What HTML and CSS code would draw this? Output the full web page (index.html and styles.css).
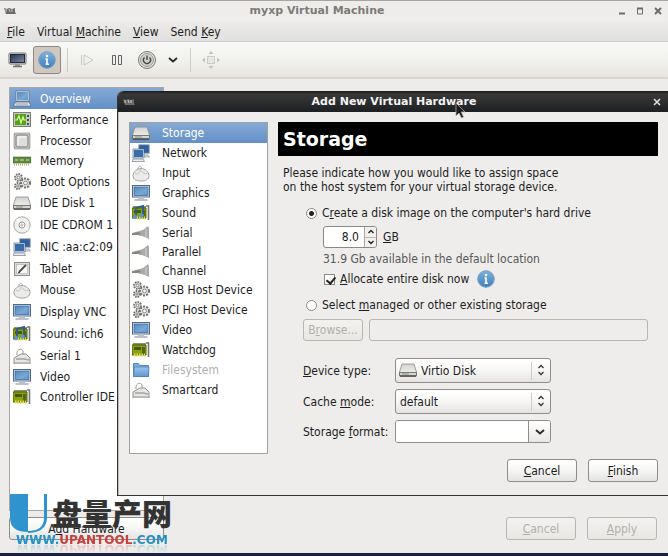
FILE: index.html
```html
<!DOCTYPE html>
<html lang="en">
<head>
<meta charset="utf-8">
<title>myxp Virtual Machine</title>
<link rel="stylesheet" href="styles.css">
</head>
<body>
<svg class="defs" width="0" height="0" aria-hidden="true">
  <defs>
    <linearGradient id="g-screen" x1="0" y1="0" x2="1" y2="1"><stop offset="0" stop-color="#5585ba"/><stop offset=".6" stop-color="#79a8d6"/><stop offset="1" stop-color="#5e92c8"/></linearGradient>
    <linearGradient id="g-dark" x1="0" y1="0" x2="1" y2="1"><stop offset="0" stop-color="#26324d"/><stop offset="1" stop-color="#7d8aa6"/></linearGradient>
    <linearGradient id="g-disk" x1="0" y1="0" x2="0" y2="1"><stop offset="0" stop-color="#d2d2d0"/><stop offset="1" stop-color="#f7f7f6"/></linearGradient>
    <linearGradient id="g-info" x1="0" y1="0" x2="0" y2="1"><stop offset="0" stop-color="#7fb0dc"/><stop offset="1" stop-color="#3f7fbf"/></linearGradient>
    <linearGradient id="g-folder" x1="0" y1="0" x2="0" y2="1"><stop offset="0" stop-color="#9cc4ea"/><stop offset="1" stop-color="#5d99d3"/></linearGradient>
  </defs>
  <symbol id="i-vmm" viewBox="0 0 12 8"><path d="M0 1l3 1 2-1 3 1 3-1v4l1 2H2z" fill="#6a6a66"/><path d="M2 2v3M5 2l1 3M8 2v3" stroke="#c9c9c5"/></symbol>
  <symbol id="i-computer" viewBox="0 0 18 18"><rect x="3.5" y="1.500" width="12" height="9" fill="url(#g-screen)" stroke="#e6e8ea"/><rect x="3" y="1" width="13" height="10" fill="none" stroke="#46607f" stroke-width=".6"/><path d="M3 12h13l2 4H0z" fill="#e9ebed" stroke="#5a6c80" stroke-width=".8"/><path d="M3 14h12" stroke="#8d98a3"/></symbol>
  <symbol id="i-perf" viewBox="0 0 18 18"><rect x=".5" y="1.500" width="17" height="14" fill="#c8cac4" stroke="#7a7f74"/><rect x="2" y="3" width="11" height="11" fill="#57a01c"/><path d="M2 9h2l2-4 2 7 2-6 1 3h2" fill="none" stroke="#d6ff95" stroke-width="1.200"/><path d="M15 4v2M15 8v2M15 12v2" stroke="#4a5046" stroke-width="2"/></symbol>
  <symbol id="i-cpu" viewBox="0 0 18 18"><rect x="1.500" y="1.500" width="15" height="15" fill="none" stroke="#6b6b68" stroke-width="2" stroke-dasharray="1 1"/><rect x="3" y="3" width="12" height="12" rx="1" fill="#dededc" stroke="#73736f"/><path d="M5 13V5h8" fill="none" stroke="#fff"/></symbol>
  <symbol id="i-memory" viewBox="0 0 18 18"><path d="M0 5h18v6H0z" fill="#5f8a3a" stroke="#45692a" stroke-width=".6"/><path d="M2 7h3v2H2zM7 7h4v2H7zM13 7h3v2h-3z" fill="#98b37d"/><path d="M1 12.500h16" stroke="#b7ae72" stroke-width="2" stroke-dasharray="1 1"/></symbol>
  <symbol id="i-gears" viewBox="0 0 18 18"><g fill="#e7e7e4" stroke="#6f6f6c"><circle cx="5.500" cy="4.500" r="3.400" stroke-width="2" stroke-dasharray="1.600 1"/><circle cx="5" cy="13" r="3" stroke-width="2" stroke-dasharray="1.500 1"/><circle cx="12.500" cy="10" r="4.500" stroke-width="2" stroke-dasharray="2 1.200"/></g><g fill="#fff" stroke="#6b6b68" stroke-width=".8"><circle cx="5.500" cy="4.500" r="1.300"/><circle cx="5" cy="13" r="1.100"/><circle cx="12.500" cy="10" r="1.900"/></g></symbol>
  <symbol id="i-disk" viewBox="0 0 18 18"><path d="M3 3h12l2.500 8v4H.5v-4z" fill="url(#g-disk)" stroke="#8c8c89" stroke-width=".8"/><path d="M.5 11.500h17V14a1 1 0 0 1-1 1h-15a1 1 0 0 1-1-1z" fill="#d4d4d1" stroke="#5f5f5c" stroke-width=".8"/><path d="M1 15h16" stroke="#3f3f3d" stroke-width="1.200"/><path d="M3 13h7" stroke="#8a8a86"/></symbol>
  <symbol id="i-cd" viewBox="0 0 18 18"><circle cx="9" cy="9" r="8.200" fill="#f0f0ee" stroke="#a9a9a6"/><path d="M9 9L4 3M9 9l6 5" stroke="#fff" stroke-width="2"/><circle cx="9" cy="9" r="3" fill="#fff" stroke="#999"/><circle cx="9" cy="9" r="1.200" fill="#e2e2e0" stroke="#aaa" stroke-width=".6"/></symbol>
  <symbol id="i-net" viewBox="0 0 18 18"><rect x="7" y="1" width="10" height="8" fill="#2e62a0" stroke="#5c7591"/><path d="M9 11h7l1.500 2h-7z" fill="#e3e6e9" stroke="#8793a0" stroke-width=".7"/><rect x="1.500" y="5.500" width="10" height="8" fill="#356dae" stroke="#e2e5e8"/><rect x="1" y="5" width="11" height="9" fill="none" stroke="#44576d" stroke-width=".6"/><path d="M1 15h10l1.500 2.500H0z" fill="#eceef0" stroke="#75818e" stroke-width=".7"/></symbol>
  <symbol id="i-tablet" viewBox="0 0 18 18"><rect x="1.500" y="2.500" width="15" height="13" fill="#ddd" stroke="#8c8c89"/><rect x="3.500" y="4.500" width="11" height="9" fill="#f7f7f6" stroke="#aaa" stroke-width=".6"/><path d="M6 12l7-7" stroke="#4b4b49" stroke-width="1.800"/><path d="M5 13l2-1" stroke="#222"/></symbol>
  <symbol id="i-mouse" viewBox="0 0 18 18"><path d="M5.500 6C6 1 10 1 9.500 6" fill="none" stroke="#aaa"/><path d="M9 4.500c4 0 8 3.500 8 7 0 4-3.500 5.500-8 5.500s-8-1.500-8-5.500c0-3.500 4-7 8-7z" fill="#ebebe9" stroke="#a2a29f"/><path d="M3 9c3 2.500 4 .5 5.500-4M8.500 6c2 3 4 4 7 3.500" fill="none" stroke="#c2c2bf"/></symbol>
  <symbol id="i-display" viewBox="0 0 18 18"><rect x=".5" y="1.500" width="17" height="11.500" fill="#e4e7ea" stroke="#4f6b8b"/><rect x="2" y="3" width="14" height="8.500" fill="url(#g-screen)" stroke="#3566a0" stroke-width=".7"/><path d="M6 13h6v2H6z" fill="#b9bfc6"/><path d="M2.500 16h13" stroke="#9da7b2" stroke-width="1.400"/></symbol>
  <symbol id="i-card" viewBox="0 0 18 18"><path d="M0 4h14v10H0z" fill="#86a30c" stroke="#4e6207"/><path d="M14 2h2.500v14" fill="none" stroke="#777b72" stroke-width="1.600"/><path d="M2 6h7v3H2z" fill="#48580c"/><path d="M10 6h3v7h-3z" fill="#536616"/><path d="M2 14h11" stroke="#ead94a" stroke-width="3" stroke-dasharray="1.500 1"/><path d="M1 3h13" stroke="#3e4d0a" stroke-width="1.200"/></symbol>
  <symbol id="i-sound" viewBox="0 0 18 18"><use href="#i-card"/><path d="M4 13V4l7-2v9" fill="none" stroke="#2d5c8f" stroke-width="1.800"/><ellipse cx="3" cy="13" rx="2.400" ry="1.900" fill="#5c93cb"/><ellipse cx="9.500" cy="11.500" rx="2.400" ry="1.900" fill="#5c93cb"/></symbol>
  <symbol id="i-serial" viewBox="0 0 18 18"><path d="M4 8c-1-6 5-7 6-4v3" fill="none" stroke="#9a9a97"/><path d="M1 11l7-4h5l4 4v5H1z" fill="#e6e6e4" stroke="#929290"/><path d="M3 12h8l5 1" fill="none" stroke="#a4a4a1" stroke-width="1.300"/><path d="M0 16.500h18" stroke="#b8b8b5"/></symbol>
  <symbol id="i-plug" viewBox="0 0 18 18"><path d="M0 9l11-3 5-4 1 2v11l-2-1-5-2H8l-2-1H0z" fill="#aaa9a6"/><path d="M0 9.500l7-1.500 2 2-4 1H0z" fill="#858481"/><path d="M14 5v8" stroke="#c8c7c4" stroke-width="1.500"/></symbol>
  <symbol id="i-folder" viewBox="0 0 18 18"><path d="M1.500 15.500v-13h5l1 2h9v11z" fill="#78aede" stroke="#5585b5"/><path d="M1.500 15.500L2.500 6h14.500l-.5 9.500z" fill="url(#g-folder)" stroke="#4b83bc" stroke-width=".8"/></symbol>
  <symbol id="i-info" viewBox="0 0 18 18"><circle cx="9" cy="9" r="8.300" fill="url(#g-info)" stroke="#7d9fbe"/><circle cx="9" cy="5" r="1.300" fill="#fff"/><path d="M7.500 8H9v5M7.500 13.200h3.500" fill="none" stroke="#fff" stroke-width="1.600"/></symbol>
  <symbol id="i-updown" viewBox="0 0 8 12"><path d="M1.500 4L4 1.500 6.500 4M1.500 8L4 10.500 6.500 8" fill="none" stroke="#333" stroke-width="1.300"/></symbol>
  <symbol id="i-down" viewBox="0 0 10 6"><path d="M1 1l4 3.500L9 1" fill="none" stroke="#2b2b2b" stroke-width="1.900"/></symbol>
</svg>

<div class="main-window">
  <header class="titlebar">
    <svg class="app-icon"><use href="#i-vmm"/></svg>
    <h1 class="title">myxp Virtual Machine</h1>
    <div class="window-controls">
      <button aria-label="Minimize"><svg viewBox="0 0 8 8"><path d="M1 6.500h6" stroke-width="2"/></svg></button>
      <button aria-label="Maximize"><svg viewBox="0 0 8 8"><path d="M1 1.500h6" stroke-width="2"/><path d="M1.500 2v5h5V2"/></svg></button>
      <button aria-label="Close"><svg viewBox="0 0 8 8"><path d="M1 1l6 6M7 1L1 7" stroke-width="2"/></svg></button>
    </div>
  </header>
  <nav class="menubar">
    <a href="#"><u>F</u>ile</a><a href="#">Virtual <u>M</u>achine</a><a href="#"><u>V</u>iew</a><a href="#">Send <u>K</u>ey</a>
  </nav>
  <div class="toolbar">
    <button aria-label="Console"><svg width="19" height="18" viewBox="0 0 19 18"><rect x="1" y="2" width="17" height="11" rx="1" fill="#e8e8e6" stroke="#72726f"/><rect x="2.500" y="3.500" width="14" height="8" fill="url(#g-dark)" stroke="#222b40"/><path d="M7 13h5v2H7z" fill="#999"/><path d="M5 15.500h9" stroke="#72726f" stroke-width="1.500"/></svg></button>
    <button class="pressed" aria-label="Details" aria-pressed="true"><svg width="18" height="18"><use href="#i-info"/></svg></button>
    <span class="sep"></span>
    <button disabled aria-label="Run"><svg width="14" height="14" viewBox="0 0 14 14"><path d="M1.500 2v10M4 2v10l9-5z" fill="none" stroke="#c8c8c5"/></svg></button>
    <button aria-label="Pause"><svg width="12" height="12" viewBox="0 0 12 12"><path d="M1.500 1.500h3v9h-3zM7.500 1.500h3v9h-3z" fill="#eee" stroke="#626260"/></svg></button>
    <button aria-label="Shut down"><svg width="20" height="20" viewBox="0 0 20 20"><circle cx="10" cy="10" r="8.500" fill="#e4e4e2" stroke="#787875"/><circle cx="10" cy="10" r="6.500" fill="#d0d0cd" stroke="#9b9b98"/><path d="M7.500 7.500a3.500 3.500 0 1 0 5 0M10 5.500V10" fill="none" stroke="#454543" stroke-width="1.400"/></svg></button>
    <button class="narrow" aria-label="Shut down options"><svg width="10" height="6"><use href="#i-down"/></svg></button>
    <span class="sep wide"></span>
    <button disabled aria-label="Fullscreen"><svg width="18" height="18" viewBox="0 0 18 18"><rect x="5.500" y="5.500" width="7" height="7" fill="#e6e6e3" stroke="#bcbcb9" stroke-dasharray="2 1"/><path d="M9 0l2.500 3h-5zM9 18l2.500-3h-5zM0 9l3-2.500v5zM18 9l-3-2.500v5z" fill="#c2c2bf"/></svg></button>
  </div>
  <main class="details">
    <section class="sidebar">
      <ul class="hw-list">
        <li class="selected"><svg><use href="#i-computer"/></svg>Overview</li>
        <li><svg><use href="#i-perf"/></svg>Performance</li>
        <li><svg><use href="#i-cpu"/></svg>Processor</li>
        <li class="short"><svg><use href="#i-memory"/></svg>Memory</li>
        <li><svg><use href="#i-gears"/></svg>Boot Options</li>
        <li class="tall"><svg><use href="#i-disk"/></svg>IDE Disk 1</li>
        <li class="tall"><svg><use href="#i-cd"/></svg>IDE CDROM 1</li>
        <li class="tall"><svg><use href="#i-net"/></svg>NIC :aa:c2:09</li>
        <li><svg><use href="#i-tablet"/></svg>Tablet</li>
        <li class="tall"><svg><use href="#i-mouse"/></svg>Mouse</li>
        <li class="tall"><svg><use href="#i-display"/></svg>Display VNC</li>
        <li class="tall"><svg><use href="#i-sound"/></svg>Sound: ich6</li>
        <li><svg><use href="#i-serial"/></svg>Serial 1</li>
        <li><svg><use href="#i-display"/></svg>Video</li>
        <li class="short"><svg><use href="#i-card"/></svg>Controller IDE</li>
      </ul>
      <button class="btn add">A<u>d</u>d Hardware</button>
    </section>
    <div class="actions">
      <button class="btn" disabled><u>C</u>ancel</button>
      <button class="btn" disabled><u>A</u>pply</button>
    </div>
  </main>
</div>

<section class="dialog" role="dialog" aria-labelledby="dialog-title">
  <header class="dialog-title">
    <svg class="app-icon"><use href="#i-vmm"/></svg>
    <h2 id="dialog-title">Add New Virtual Hardware</h2>
    <button aria-label="Close"><svg viewBox="0 0 8 8"><path d="M1 1l6 6M7 1L1 7" stroke-width="1.600"/></svg></button>
  </header>
  <div class="dialog-body">
    <ul class="type-list">
      <li class="selected"><svg><use href="#i-disk"/></svg>Storage</li>
      <li><svg><use href="#i-net"/></svg>Network</li>
      <li><svg><use href="#i-mouse"/></svg>Input</li>
      <li><svg><use href="#i-display"/></svg>Graphics</li>
      <li><svg><use href="#i-sound"/></svg>Sound</li>
      <li class="short"><svg><use href="#i-plug"/></svg>Serial</li>
      <li class="short"><svg><use href="#i-plug"/></svg>Parallel</li>
      <li class="short"><svg><use href="#i-plug"/></svg>Channel</li>
      <li><svg><use href="#i-gears"/></svg>USB Host Device</li>
      <li><svg><use href="#i-gears"/></svg>PCI Host Device</li>
      <li><svg><use href="#i-display"/></svg>Video</li>
      <li><svg><use href="#i-card"/></svg>Watchdog</li>
      <li class="off"><svg><use href="#i-folder"/></svg>Filesystem</li>
      <li><svg><use href="#i-serial"/></svg>Smartcard</li>
    </ul>
    <form class="storage">
      <h3>Storage</h3>
      <p class="intro">Please indicate how you would like to assign space<br>on the host system for your virtual storage device.</p>
      <div class="options">
        <label class="choice"><input type="radio" name="source" checked><span>C<u>r</u>eate a disk image on the computer's hard drive</span></label>
        <div class="nested">
          <div class="size-row">
            <span class="spin">
              <input id="size" type="text" inputmode="decimal" value="8.0">
              <span class="steps">
                <button type="button" aria-label="Increase"><svg viewBox="0 0 8 5"><path d="M1.500 4L4 1.500 6.500 4"/></svg></button>
                <button type="button" aria-label="Decrease"><svg viewBox="0 0 8 5"><path d="M1.500 1L4 3.500 6.500 1"/></svg></button>
              </span>
            </span>
            <label for="size"><u>G</u>B</label>
          </div>
          <p class="hint">31.9 Gb available in the default location</p>
          <div class="alloc">
            <label><input type="checkbox" checked><span><u>A</u>llocate entire disk now</span></label>
            <svg width="18" height="18"><use href="#i-info"/></svg>
          </div>
        </div>
        <label class="choice"><input type="radio" name="source"><span>Select <u>m</u>anaged or other existing storage</span></label>
        <div class="browse">
          <button type="button" class="btn" disabled>B<u>r</u>owse...</button>
          <input type="text" aria-label="Storage path" disabled>
        </div>
        <div class="fields">
          <label for="device"><u>D</u>evice type:</label>
          <span class="combo with-icon"><svg class="lead"><use href="#i-disk"/></svg><select id="device"><option>Virtio Disk</option></select><svg class="arrow"><use href="#i-updown"/></svg></span>
          <label for="cache">Cache <u>m</u>ode:</label>
          <span class="combo"><select id="cache"><option>default</option></select><svg class="arrow"><use href="#i-updown"/></svg></span>
          <label for="format">Storage <u>f</u>ormat:</label>
          <span class="entry"><input id="format" type="text"><button type="button" aria-label="Show formats"><svg width="10" height="6"><use href="#i-down"/></svg></button></span>
        </div>
      </div>
    </form>
  </div>
  <footer class="dialog-actions">
    <button class="btn"><u>C</u>ancel</button>
    <button class="btn"><u>F</u>inish</button>
  </footer>
</section>

<svg class="pointer" viewBox="0 0 12 17" aria-hidden="true"><path d="M1 1v13l3-3 2.500 5 2-1L6.200 10H10z" fill="#1c1c1c" stroke="#aaa" stroke-width=".8"/></svg>

<div class="brand">
  <div class="brand-top">
    <svg viewBox="0 0 37 40" aria-hidden="true"><path d="M0 0h18v38C7 38 0 34 0 24z" fill="#2f94cd"/><path d="M34 0h3v24c0 10-8 15-19 15v-2c10 0 16-4 16-13z" fill="#2f94cd"/></svg>
    <span class="brand-name" lang="zh">盘量产网</span>
  </div>
  <div class="brand-url">WWW.<span>UPANTOOL</span>.COM</div>
</div>
</body>
</html>
```
FILE: styles.css
```css
* { box-sizing: border-box; }

body, h1, h2, h3, p, ul { margin: 0; padding: 0; }

body {
  min-height: 100vh;
  display: flex;
  position: relative;
  overflow: hidden;
  background: #1b2140;
  color: #1d1d1d;
  font: 12px/14px "DejaVu Sans Condensed", "DejaVu Sans", sans-serif;
}

ul { list-style: none; }
svg { display: block; flex: none; }
.defs { position: absolute; }
u { text-underline-offset: 1px; }
a { color: inherit; text-decoration: none; }

button, input, select {
  margin: 0;
  padding: 0;
  color: inherit;
  font: inherit;
}

button { border: 0; background: none; }
h1, h2 { font: bold 11px/14px "DejaVu Sans", sans-serif; }

/* Main window */
.main-window {
  flex: 1;
  display: flex;
  flex-direction: column;
  min-height: 100vh;
  border-top: 1px solid #aaa4a2;
  border-bottom: 3px solid #1b2140;
  background: #eeecea;
}

.titlebar {
  display: flex;
  align-items: center;
  height: 20px;
  padding: 0 6px 0 4px;
  background: #efedec;
  color: #7c7b76;
}

.app-icon { width: 12px; height: 8px; }
.title { flex: 1; text-align: center; }
.window-controls { display: flex; gap: 10px; }

.window-controls button svg,
.dialog-title button svg {
  width: 8px;
  height: 8px;
  fill: none;
  stroke: #6d6c68;
}

.menubar {
  display: flex;
  gap: 12px;
  height: 21px;
  padding: 4px 7px 0;
  border-bottom: 1px solid #cfcecd;
  background: linear-gradient(#eeebe9, #e0e0e0);
}

.toolbar {
  display: flex;
  align-items: center;
  gap: 2px;
  height: 37px;
  padding: 0 3px;
  border-bottom: 2px solid #dad5d0;
  background: linear-gradient(#f8f8f7, #f1f2ee 50%, #e9e4e0);
}

.toolbar button {
  display: flex;
  align-items: center;
  justify-content: center;
  width: 28px;
  height: 28px;
}

.toolbar .pressed {
  border: 1px solid #8e8880;
  border-radius: 3px;
  background: #cfc8c0;
}

.toolbar .narrow { width: 20px; }

.sep {
  width: 8px;
  height: 24px;
  background: linear-gradient(#cfccc8, #cfccc8) center / 1px 100% no-repeat;
}

.sep.wide { width: 10px; }

.details {
  flex: 1;
  display: flex;
  padding: 8px 11px 13px 9px;
}

.sidebar {
  display: flex;
  flex-direction: column;
  gap: 6px;
  width: 155px;
}

.hw-list {
  flex: 1;
  border: 1px solid #a9a7a5;
  background: #fff;
}

.hw-list li {
  display: flex;
  align-items: center;
  gap: 9px;
  height: 21px;
  padding-left: 3px;
}

.hw-list li.tall { height: 22px; }
.hw-list li.short { height: 20px; }
.hw-list svg, .type-list svg { width: 18px; height: 18px; }

.selected {
  background: linear-gradient(#84a9d6, #6490c6);
  color: #fff;
}

.btn {
  width: 70px;
  height: 23px;
  border: 1px solid #8f8c89;
  border-radius: 3px;
  background: linear-gradient(#fff, #f6f6f5 50%, #e4e3e1);
}

.btn:disabled {
  border-color: #b9b5b0;
  background: linear-gradient(#f3f2f0, #e9e7e4);
  color: #b3afab;
}

.btn.add { width: 100%; }

.actions {
  flex: 1;
  display: flex;
  align-items: flex-end;
  justify-content: flex-end;
  gap: 11px;
}

/* Dialog */
.dialog {
  position: absolute;
  top: 91px;
  left: 117px;
  right: 0;
  border: 1px solid #333;
  border-width: 0 0 1px 1px;
  border-radius: 6px 0 0 0;
  background: #eeedeb;
  box-shadow: inset 1px 0 #bbb;
}

.dialog-title {
  display: flex;
  align-items: center;
  height: 21px;
  padding: 0 7px 0 5px;
  border-radius: 6px 0 0 0;
  background: linear-gradient(#1c1c1c, #383838 15%, #2a2b2c 60%, #1c2024);
  color: #f2f2f2;
}

.dialog-title h2 { flex: 1; text-align: center; }
.dialog-title button svg { stroke: #ddd; }

.dialog-body {
  display: flex;
  gap: 10px;
  padding: 10px 10px 0 11px;
}

.type-list {
  width: 139px;
  height: 332px;
  border: 1px solid #a3a09d;
  background: #fff;
}

.type-list li {
  display: flex;
  align-items: center;
  gap: 12px;
  height: 20px;
  padding-left: 2px;
}

.type-list li.short { height: 19px; }
.type-list .off { color: #b2b0ae; }

.storage { flex: 1; min-width: 0; }

.storage h3 {
  height: 34px;
  padding-left: 5px;
  background: #000;
  color: #fff;
  font: bold 19px/34px "DejaVu Sans", sans-serif;
}

.intro { padding: 10px 5px 0; }
.options { padding: 11px 10px 0 25px; }

.choice, .size-row, .alloc, .alloc label, .browse {
  display: flex;
  align-items: center;
}

.choice { gap: 5px; height: 16px; padding-left: 3px; }

input[type="radio"], input[type="checkbox"] {
  appearance: none;
  flex: none;
  width: 11px;
  height: 11px;
  border: 1px solid #8b8885;
  background: #fff;
}

input[type="radio"] { border-radius: 50%; }

input[type="radio"]:checked {
  background: radial-gradient(circle, #222 0 2px, #fff 3px);
}

input[type="checkbox"]:checked { position: relative; }

input[type="checkbox"]:checked::after {
  content: "";
  position: absolute;
  left: 3px;
  top: 0;
  width: 4px;
  height: 7px;
  border: solid #222;
  border-width: 0 2px 2px 0;
  transform: rotate(40deg);
}

.nested { padding: 5px 0 0 20px; }
.size-row { gap: 6px; }

.spin {
  display: flex;
  width: 54px;
  height: 22px;
  border: 1px solid #8b8885;
  border-radius: 3px;
  background: #fff;
  overflow: hidden;
}

.spin input {
  flex: 1;
  min-width: 0;
  padding-right: 5px;
  border: 0;
  background: none;
  text-align: right;
}

.steps {
  display: flex;
  flex-direction: column;
  width: 12px;
  border-left: 1px solid #aaa7a4;
  background: #f1f0ee;
}

.steps button {
  flex: 1;
  display: flex;
  align-items: center;
  justify-content: center;
}

.steps button + button { border-top: 1px solid #bbb8b5; }
.steps svg { width: 8px; height: 5px; fill: none; stroke: #222; stroke-width: 1.4px; }

.hint { padding-top: 4px; color: #595856; }
.alloc { gap: 8px; padding: 4px 0 0 1px; }
.alloc label { gap: 5px; }
.nested + .choice { margin-top: 9px; }
.browse { gap: 6px; padding-top: 6px; }
.browse .btn { width: 60px; height: 22px; }

.browse input {
  flex: 1;
  min-width: 0;
  height: 22px;
  border: 1px solid #b9b5b0;
  border-radius: 3px;
  background: #efedeb;
}

.fields {
  display: grid;
  grid-template-columns: 86px 156px;
  column-gap: 6px;
  row-gap: 6px;
  align-items: center;
  padding-top: 17px;
}

.combo { position: relative; }

.combo select {
  appearance: none;
  display: block;
  width: 100%;
  height: 25px;
  padding-left: 4px;
  border: 1px solid #8f8c89;
  border-radius: 3px;
  background:
    linear-gradient(#cfcdcb, #cfcdcb) right 18px center / 1px 18px no-repeat,
    linear-gradient(#fff, #f6f6f5 50%, #e4e3e1);
}

.with-icon select { padding-left: 25px; }
.combo .lead { position: absolute; left: 4px; top: 3px; width: 18px; height: 18px; }
.combo .arrow { position: absolute; right: 6px; top: 6px; width: 8px; height: 12px; }

.entry {
  display: flex;
  height: 23px;
  border: 1px solid #8f8c89;
  border-radius: 3px;
  background: #fff;
  overflow: hidden;
}

.entry input {
  flex: 1;
  min-width: 0;
  border: 0;
}

.entry button {
  display: flex;
  align-items: center;
  justify-content: center;
  width: 22px;
  border-left: 1px solid #8f8c89;
  background: linear-gradient(#fff, #e8e7e5);
}

.dialog-actions {
  display: flex;
  justify-content: flex-end;
  gap: 11px;
  padding: 5px 10px 13px;
}

/* Overlays */
.pointer {
  position: absolute;
  left: 455px;
  top: 102px;
  width: 12px;
  height: 17px;
}

.brand {
  position: absolute;
  left: 10px;
  bottom: 10px;
  width: 164px;
}

.brand-top { display: flex; gap: 5px; }
.brand-top svg { width: 37px; height: 40px; }

.brand-name {
  color: #333;
  font: 900 30px/36px "Noto Sans CJK SC", sans-serif;
}

.brand-url {
  padding-left: 6px;
  color: #2592c4;
  font: bold 12px/12px "DejaVu Sans", sans-serif;
  -webkit-box-reflect: below -3px linear-gradient(transparent 10%, rgba(0, 0, 0, 0.3));
}

.brand-url span { color: #c8403c; }
```
